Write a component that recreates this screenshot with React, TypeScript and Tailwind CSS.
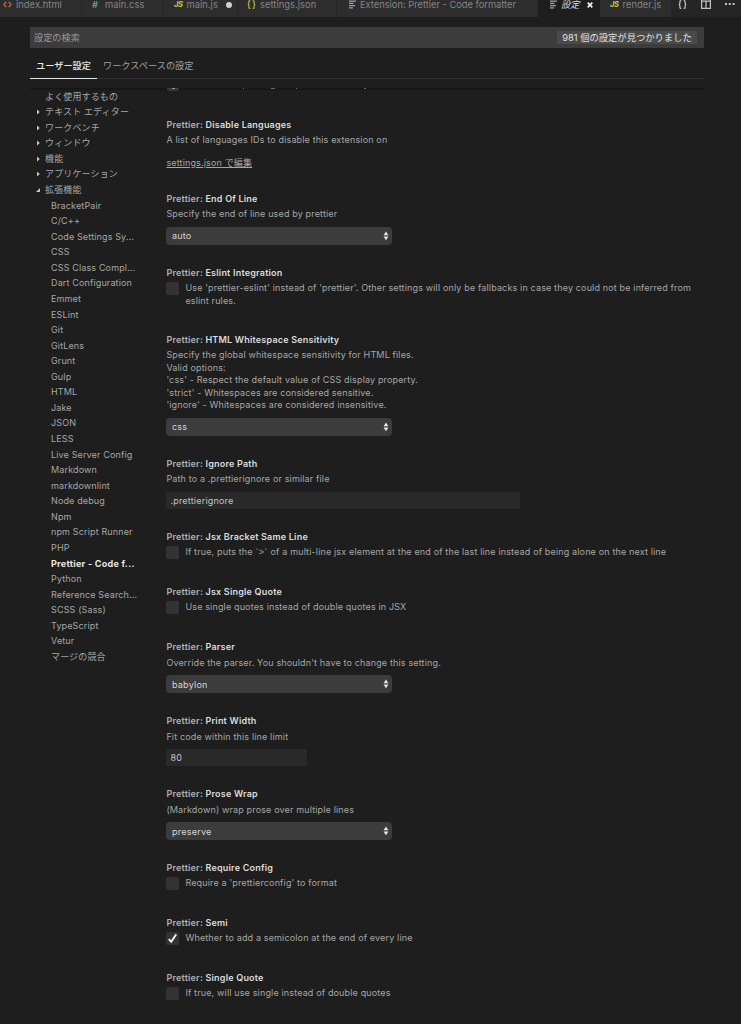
import type { ReactNode } from "react";

type TreeItem = { label: string; kind: "plain" | "closed" | "open" | "child"; active?: boolean };

const tree: TreeItem[] = [
  { label: "よく使用するもの", kind: "plain" },
  { label: "テキスト エディター", kind: "closed" },
  { label: "ワークベンチ", kind: "closed" },
  { label: "ウィンドウ", kind: "closed" },
  { label: "機能", kind: "closed" },
  { label: "アプリケーション", kind: "closed" },
  { label: "拡張機能", kind: "open" },
  ...[
    "BracketPair", "C/C++", "Code Settings Sy...", "CSS", "CSS Class Compl...", "Dart Configuration",
    "Emmet", "ESLint", "Git", "GitLens", "Grunt", "Gulp", "HTML", "Jake", "JSON", "LESS",
    "Live Server Config", "Markdown", "markdownlint", "Node debug", "Npm", "npm Script Runner", "PHP",
    "Prettier - Code f...", "Python", "Reference Search...", "SCSS (Sass)", "TypeScript", "Vetur", "マージの競合",
  ].map((label): TreeItem => ({ label, kind: "child", active: label.startsWith("Prettier") })),
];

function Select({ value }: { value: string }) {
  return (
    <div className="mt-[6.2px] flex h-[18px] w-[226px] items-center justify-between rounded-[4px] bg-[#3c3c3c] pl-[5.5px] pr-[3.5px] tracking-[0.25px] text-[#d6d6d6]">
      <span>{value}</span>
      <svg width="6" height="10" viewBox="0 0 6 10" fill="#e8e8e8">
        <path d="M3 .6 5.4 4.2H.6zM3 9.2.6 5.6h4.8z" />
      </svg>
    </div>
  );
}

function Field({ value, className }: { value: string; className: string }) {
  return (
    <div className={className}>
      <div className="flex h-[17px] items-center bg-[#292929] pl-[4px] tracking-[0.2px] text-[#c4c4c4]">{value}</div>
    </div>
  );
}

function Check({ on, children }: { on?: boolean; children: ReactNode }) {
  return (
    <div className="mt-[1px] flex">
      <div className="mt-[2.6px] flex h-[13px] w-[13px] shrink-0 items-center justify-center rounded-[2px] bg-[#333333]">
        {on && (
          <svg width="11" height="11" viewBox="0 0 11 11" fill="none" stroke="#f0f0f0" strokeWidth="1.9">
            <path d="M1.8 6.2 4.2 8.8 9.2 1.4" />
          </svg>
        )}
      </div>
      <div className="ml-[6px] mt-[2.6px] leading-[12.6px]">{children}</div>
    </div>
  );
}

function Setting({ name, className, children }: { name: string; className: string; children: ReactNode }) {
  return (
    <section className={className}>
      <h3 className="h-3 font-semibold leading-3 tracking-[0.21px] text-[#b0b0b0]">
        Prettier: <span className="text-[#dcdcdc]">{name}</span>
      </h3>
      {children}
    </section>
  );
}

function Desc({ children }: { children: ReactNode }) {
  return <div className="mt-[3.5px] leading-[12.6px]">{children}</div>;
}

function LinesIcon({ color }: { color: string }) {
  return (
    <svg width="7" height="9" viewBox="0 0 7 9" stroke={color} strokeWidth="1.3">
      <path d="M0 1.2h7M0 3.4h4.5M0 5.6h6M0 7.8h4" />
    </svg>
  );
}

function Braces({ className }: { className: string }) {
  return (
    <svg className={className} width="9" height="9" viewBox="0 0 9 9" fill="none" stroke="currentColor" strokeWidth="1.2">
      <path d="M3.3.6H2.9Q1.9.6 1.9 1.6V3.2Q1.9 4.4.7 4.5 1.9 4.6 1.9 5.8V7.4Q1.9 8.4 2.9 8.4H3.3M5.7.6H6.1Q7.1.6 7.1 1.6V3.2Q7.1 4.4 8.3 4.5 7.1 4.6 7.1 5.8V7.4Q7.1 8.4 6.1 8.4H5.7" />
    </svg>
  );
}

export default function App() {
  return (
    <div className="flex h-[1024px] w-[741px] flex-col overflow-hidden bg-[#1e1e1e] font-['Inter','Noto_Sans_CJK_JP',sans-serif] text-[9px] tracking-[0.15px] text-[#a6a6a6]">
      <header className="flex h-[17px] shrink-0 bg-[#252526] text-[9.3px] leading-[9.6px] tracking-[0.06px] text-[#858585]">
        <div className="flex h-[17px] w-[82px] items-start border-r border-[#252526] bg-[#2d2d2d] pl-[3px]">
          <svg className="mt-[1px]" width="9" height="7" viewBox="0 0 9 7" fill="none" stroke="#b5603a" strokeWidth="1.4">
            <path d="M3.3.7.9 3.5l2.4 2.8M5.7.7l2.4 2.8-2.4 2.8" />
          </svg>
          <span className="ml-[4px]">index.html</span>
        </div>
        <div className="flex w-[82px] border-r border-[#252526] bg-[#2d2d2d] pl-[10px]">
          <span className="w-[13px] text-[9px] font-bold italic text-[#519aba]">#</span>
          <span>main.css</span>
        </div>
        <div className="flex w-[74px] border-r border-[#252526] bg-[#2d2d2d] pl-[10px]">
          <span className="w-[12.5px] text-[7.5px] font-bold italic tracking-[-0.4px] text-[#cbcb41]">JS</span>
          <span>main.js</span>
          <span className="ml-auto mr-[5px] mt-[2px] h-[6px] w-[6px] rounded-full bg-[#d0d0d0]" />
        </div>
        <div className="flex w-[99px] border-r border-[#252526] bg-[#2d2d2d] pl-[9px]">
          <Braces className="text-[#b5b53c]" />
          <span className="ml-[4px]">settings.json</span>
        </div>
        <div className="flex w-[201px] bg-[#2d2d2d] pl-[12px]">
          <LinesIcon color="#a0a0a0" />
          <span className="ml-[4px] whitespace-nowrap tracking-[0px]">Extension: Prettier - Code formatter</span>
        </div>
        <div className="flex w-[62px] bg-[#1e1e1e] pl-[12px]">
          <LinesIcon color="#a0a0a0" />
          <span className="ml-[4px] italic text-[#d8d8d8]">設定</span>
          <svg className="ml-[7px] mt-[2px]" width="6" height="6" viewBox="0 0 6 6" stroke="#f0f0f0" strokeWidth="1.7">
            <path d="M.7.7l4.6 4.6M5.3.7.7 5.3" />
          </svg>
        </div>
        <div className="flex w-[71px] bg-[#2d2d2d] pl-[10px]">
          <span className="w-[12.5px] text-[7.5px] font-bold italic tracking-[-0.4px] text-[#cbcb41]">JS</span>
          <span>render.js</span>
        </div>
        <div className="flex pl-[7px] text-[#c5c5c5]">
          <Braces className="text-[#c5c5c5]" />
          <svg className="ml-[14px]" width="10" height="9" viewBox="0 0 10 9" fill="none" stroke="currentColor" strokeWidth="1.2">
            <path d="M.6 0v8.4h8.8V0M5 1v7M0 1.2h10" />
          </svg>
          <svg className="ml-[14px] mt-[3px]" width="10" height="3" viewBox="0 0 10 3" fill="currentColor">
            <path d="M0 0h2v2H0zM3.8 0h2v2h-2zM7.6 0h2v2h-2z" />
          </svg>
        </div>
      </header>

      <div className="ml-[30px] mt-[10px] flex h-[21px] w-[674px] shrink-0 items-center justify-between bg-[#3c3c3c] pl-[4px] pr-[7px]">
        <span className="text-[9.2px] tracking-[0px] text-[#989898]">設定の検索</span>
        <span className="flex h-[13px] w-[140px] items-center justify-center bg-[#4a4a4a] text-[9.3px] tracking-[0px] text-[#e0e0e0]">
          981 個の設定が見つかりました
        </span>
      </div>

      <nav className="ml-[30px] mt-[9px] flex h-[22px] w-[674px] shrink-0 border-b border-[#333333] text-[9.2px] leading-[18px] tracking-[0px]">
        <span className="h-[22px] w-[67px] border-b border-[#e7e7e7] pl-[6px] font-medium text-[#e7e7e7]">ユーザー設定</span>
        <span className="pl-[6px] text-[#a0a0a0]">ワークスペースの設定</span>
      </nav>

      <div className="ml-[30px] mt-[9px] flex h-[2px] w-[674px] shrink-0 items-start bg-[#171717]">
        <div className="ml-[137px] h-[3px] w-[12px] rounded-b-[2px] bg-[#3a3a3a]">
          <div className="mx-auto h-[1px] w-[3px] bg-[#999999]" />
        </div>
        <div className="ml-[64px] h-[1px] w-[1px] bg-[#6a6a6a]" />
        <div className="ml-[27px] h-[1px] w-[4px] bg-[#6a6a6a]" />
        <div className="ml-[21px] h-[1px] w-[1px] bg-[#6a6a6a]" />
        <div className="ml-[67px] h-[1px] w-[2px] bg-[#6a6a6a]" />
      </div>

      <main className="flex">
        <aside className="-mt-[1.4px] w-[166.4px] shrink-0">
          {tree.map((t) => (
            <div
              key={t.label}
              className={
                t.kind === "child"
                  ? "flex h-[15.57px] items-center whitespace-nowrap pl-[51px]"
                  : "flex h-[15.57px] items-center whitespace-nowrap pl-[36px]"
              }
            >
              {t.kind !== "child" && (
                <svg className="mr-[4px] shrink-0" width="5" height="6" viewBox="0 0 5 6" fill="#c5c5c5">
                  {t.kind === "closed" && <path d="M1 .5 3.8 3 1 5.5z" />}
                  {t.kind === "open" && <path d="M4 1v4H0z" />}
                </svg>
              )}
              <span className={t.active ? "font-bold tracking-[0.27px] text-[#e7e7e7]" : "tracking-[0.14px]"}>{t.label}</span>
            </div>
          ))}
        </aside>

        <div className="w-[560px] pt-[28.5px]">
          <Setting name="Disable Languages" className="h-[74px]">
            <Desc>A list of languages IDs to disable this extension on</Desc>
            <div className="mt-[9px] leading-[13px] underline underline-offset-1">settings.json で編集</div>
          </Setting>
          <Setting name="End Of Line" className="h-[74px]">
            <Desc>Specify the end of line used by prettier</Desc>
            <Select value="auto" />
          </Setting>
          <Setting name="Eslint Integration" className="h-[67px]">
            <Check>Use 'prettier-eslint' instead of 'prettier'. Other settings will only be fallbacks in case they could not be inferred from<br />eslint rules.</Check>
          </Setting>
          <Setting name="HTML Whitespace Sensitivity" className="h-[124px]">
            <Desc>
              Specify the global whitespace sensitivity for HTML files.<br />
              Valid options:<br />
              'css' - Respect the default value of CSS display property.<br />
              'strict' - Whitespaces are considered sensitive.<br />
              'ignore' - Whitespaces are considered insensitive.
            </Desc>
            <Select value="css" />
          </Setting>
          <Setting name="Ignore Path" className="h-[73px]">
            <Desc>Path to a .prettierignore or similar file</Desc>
            <Field value=".prettierignore" className="mt-[6.4px] w-[354px]" />
          </Setting>
          <Setting name="Jsx Bracket Same Line" className="h-[55px]">
            <Check>
              If true, puts the <span className="font-['Liberation_Sans'] tracking-[0.4px]">`&gt;`</span> of a multi-line jsx element at the end of the last line instead of being alone on the next line
            </Check>
          </Setting>
          <Setting name="Jsx Single Quote" className="h-[55.5px]">
            <Check>Use single quotes instead of double quotes in JSX</Check>
          </Setting>
          <Setting name="Parser" className="h-[74px]">
            <Desc>Override the parser. You shouldn't have to change this setting.</Desc>
            <Select value="babylon" />
          </Setting>
          <Setting name="Print Width" className="h-[73px]">
            <Desc>Fit code within this line limit</Desc>
            <Field value="80" className="mt-[6.4px] w-[141px]" />
          </Setting>
          <Setting name="Prose Wrap" className="h-[73.5px]">
            <Desc>(Markdown) wrap prose over multiple lines</Desc>
            <Select value="preserve" />
          </Setting>
          <Setting name="Require Config" className="h-[55px]">
            <Check>Require a 'prettierconfig' to format</Check>
          </Setting>
          <Setting name="Semi" className="h-[55px]">
            <Check on>Whether to add a semicolon at the end of every line</Check>
          </Setting>
          <Setting name="Single Quote" className="h-[46px]">
            <Check>If true, will use single instead of double quotes</Check>
          </Setting>
        </div>
      </main>
    </div>
  );
}
